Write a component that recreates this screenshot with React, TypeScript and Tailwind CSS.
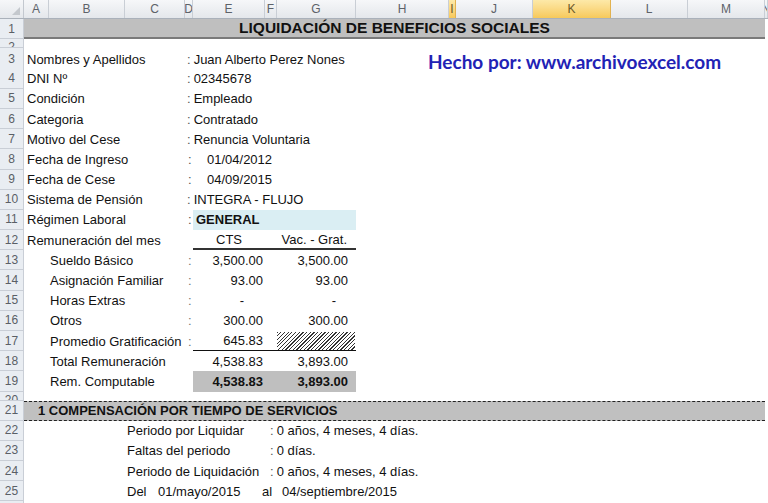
import React from "react";

const GRID =
  "grid grid-cols-[24px_25px_76px_60px_8px_72px_12px_79px_93px_7px_77px_78px_77px_77px_1fr]";

function RowNum({ n, short }: { n: number; short?: boolean }) {
  return (
    <div
      className={`col-start-1 row-start-1 bg-[#e9edf2] border-r border-b border-[#c9ced6] text-[12px] leading-none text-[#5a5f66] flex justify-center overflow-hidden ${
        short ? "items-end" : "items-center"
      }`}
    >
      <span className={short ? "mb-[-6px]" : ""}>{n}</span>
    </div>
  );
}

function Row({
  n,
  h = "h-[20.2px]",
  short,
  children,
}: {
  n: number;
  h?: string;
  short?: boolean;
  children?: React.ReactNode;
}) {
  return (
    <div className={`${GRID} ${h}`}>
      <RowNum n={n} short={short} />
      {children}
    </div>
  );
}

const cell = "row-start-1 flex items-center whitespace-nowrap text-[13px] leading-none text-[#111]";

function InfoRow({ n, label, value }: { n: number; label: string; value: string }) {
  return (
    <Row n={n}>
      <div className={`${cell} col-start-2 col-span-3 pl-[3px]`}>{label}</div>
      <div className={`${cell} col-start-5 col-span-4 pl-[2px]`}>
        <span className="text-[#555] mr-[3px]">:</span>
        {value}
      </div>
    </Row>
  );
}

function DateRow({ n, label, value }: { n: number; label: string; value: string }) {
  return (
    <Row n={n}>
      <div className={`${cell} col-start-2 col-span-3 pl-[3px]`}>{label}</div>
      <div className={`${cell} col-start-5 pl-[3px] text-[#555]`}>:</div>
      <div className={`${cell} col-start-6 col-span-3 pl-[14px]`}>{value}</div>
    </Row>
  );
}

function AmountRow({
  n,
  label,
  a,
  b,
  colon = true,
  last,
}: {
  n: number;
  label: string;
  a: string;
  b: string;
  colon?: boolean;
  last?: boolean;
}) {
  const dashA = a === "-";
  const dashB = b === "-";
  return (
    <Row n={n}>
      <div className={`${cell} col-start-3 col-span-2 pl-[1px]`}>{label}</div>
      {colon && <div className={`${cell} col-start-5 pl-[3px] text-[#777]`}>:</div>}
      <div
        className={`${cell} col-start-6 justify-end ${dashA ? "pr-[21px]" : "pr-[2px]"} ${
          last ? "border-b border-[#111]" : ""
        }`}
      >
        {a}
      </div>
      {last && <div className="row-start-1 col-start-7 border-b border-[#111]" />}
      {last ? (
        <div className="row-start-1 col-start-8 border-b border-[#111] pr-[1px] pt-[1px]">
          <div className="h-full w-full bg-[repeating-linear-gradient(135deg,#333333_0px,#333333_0.9px,#ffffff_0.9px,#ffffff_2.6px)]" />
        </div>
      ) : (
        <div className={`${cell} col-start-8 justify-end ${dashB ? "pr-[20px]" : "pr-[8px]"}`}>{b}</div>
      )}
    </Row>
  );
}

export default function App() {
  const cols = ["A", "B", "C", "D", "E", "F", "G", "H", "I", "J", "K", "L", "M", "N"];
  const hl = ["I", "K"];
  return (
    <div className="w-[768px] h-[503px] overflow-hidden bg-white font-['Liberation_Sans',Arial,sans-serif]">
      {/* Column headers */}
      <div className={`${GRID} h-[19px] border-b border-[#aab1ba]`}>
        <div className="relative bg-gradient-to-b from-[#f6f7f9] to-[#e4e7eb] border-r border-[#c3c8cf]">
          <div className="absolute right-[3px] bottom-[3px] w-0 h-0 border-l-[8px] border-l-transparent border-b-[8px] border-b-[#c4c8cd]" />
        </div>
        {cols.map((c) => (
          <div
            key={c}
            className={`flex items-center justify-center overflow-hidden text-[12px] leading-none border-r ${
              hl.includes(c)
                ? "bg-gradient-to-b from-[#fde9a8] to-[#f7c95a] text-[#6b5a2a] border-[#e2b250]"
                : "bg-gradient-to-b from-[#f6f7f9] to-[#e4e7eb] text-[#5d6269] border-[#c9ced5]"
            }`}
          >
            {c}
          </div>
        ))}
      </div>

      {/* Row 1 - title */}
      <Row n={1} h="h-[20px]">
        <div className="row-start-1 col-start-2 col-span-13 bg-[#bfbfbf] border-b-2 border-[#7a7a7a] flex items-center justify-center text-[15.5px] font-bold leading-none text-[#111] whitespace-nowrap">
          LIQUIDACIÓN DE BENEFICIOS SOCIALES
        </div>
      </Row>

      {/* Row 2 */}
      <Row n={2} h="h-[9.4px]" short />

      {/* Row 3 */}
      <Row n={3}>
        <div className={`${cell} col-start-2 col-span-3 pl-[3px]`}>Nombres y Apellidos</div>
        <div className={`${cell} col-start-5 col-span-4 pl-[2px]`}>
          <span className="text-[#555] mr-[3px]">:</span>Juan Alberto Perez Nones
        </div>
        <div className="row-start-1 col-start-9 col-span-6 flex items-center pl-[72px] pt-[4px] whitespace-nowrap font-['Lato',sans-serif] font-bold text-[19px] leading-none text-[#2222b5]">
          Hecho por: www.archivoexcel.com
        </div>
      </Row>
      <InfoRow n={4} label="DNI Nº" value="02345678" />
      <InfoRow n={5} label="Condición" value="Empleado" />
      <InfoRow n={6} label="Categoria" value="Contratado" />
      <InfoRow n={7} label="Motivo del Cese" value="Renuncia Voluntaria" />
      <DateRow n={8} label="Fecha de Ingreso" value="01/04/2012" />
      <DateRow n={9} label="Fecha de Cese" value="04/09/2015" />
      <InfoRow n={10} label="Sistema de Pensión" value="INTEGRA - FLUJO" />

      {/* Row 11 */}
      <Row n={11}>
        <div className={`${cell} col-start-2 col-span-3 pl-[3px]`}>Régimen Laboral</div>
        <div className={`${cell} col-start-5 pl-[3px] text-[#555]`}>:</div>
        <div className={`${cell} col-start-6 col-span-3 bg-[#daeef3] pl-[3px] font-bold`}>GENERAL</div>
      </Row>

      {/* Row 12 */}
      <Row n={12}>
        <div className={`${cell} col-start-2 col-span-3 pl-[3px]`}>Remuneración del mes</div>
        <div className={`${cell} col-start-6 justify-center border-b-2 border-[#333]`}>CTS</div>
        <div className="row-start-1 col-start-7 border-b-2 border-[#333]" />
        <div className={`${cell} col-start-8 justify-end pr-[9px] border-b-2 border-[#333]`}>Vac. - Grat.</div>
      </Row>

      <AmountRow n={13} label="Sueldo Básico" a="3,500.00" b="3,500.00" />
      <AmountRow n={14} label="Asignación Familiar" a="93.00" b="93.00" />
      <AmountRow n={15} label="Horas Extras" a="-" b="-" />
      <AmountRow n={16} label="Otros" a="300.00" b="300.00" />
      <AmountRow n={17} label="Promedio Gratificación" a="645.83" b="" last />
      <AmountRow n={18} label="Total Remuneración" a="4,538.83" b="3,893.00" colon={false} />

      {/* Row 19 */}
      <Row n={19}>
        <div className={`${cell} col-start-3 col-span-2 pl-[1px]`}>Rem. Computable</div>
        <div className={`${cell} col-start-6 justify-end pr-[2px] bg-[#bfbfbf] font-bold`}>4,538.83</div>
        <div className="row-start-1 col-start-7 bg-[#bfbfbf]" />
        <div className={`${cell} col-start-8 justify-end pr-[8px] bg-[#bfbfbf] font-bold`}>3,893.00</div>
      </Row>

      {/* Row 20 */}
      <Row n={20} h="h-[9px]" short />

      {/* Row 21 */}
      <Row n={21} h="h-[20px]">
        <div className="row-start-1 col-start-2 col-span-13 bg-[#c0c0c0] border-y border-dashed border-[#222] flex items-center pl-[14px] text-[13px] font-bold leading-none text-[#111] whitespace-nowrap">
          1 COMPENSACIÓN POR TIEMPO DE SERVICIOS
        </div>
      </Row>

      {/* Rows 22-25 */}
      <Row n={22}>
        <div className={`${cell} col-start-4 col-span-3 pl-[2px]`}>Periodo por Liquidar</div>
        <div className={`${cell} col-start-7 col-span-4 pl-[5px]`}>
          <span className="text-[#555] mr-[3px]">:</span>0 años, 4 meses, 4 días.
        </div>
      </Row>
      <Row n={23}>
        <div className={`${cell} col-start-4 col-span-3 pl-[2px]`}>Faltas del periodo</div>
        <div className={`${cell} col-start-7 col-span-4 pl-[5px]`}>
          <span className="text-[#555] mr-[3px]">:</span>0 días.
        </div>
      </Row>
      <Row n={24}>
        <div className={`${cell} col-start-4 col-span-3 pl-[2px]`}>Periodo de Liquidación</div>
        <div className={`${cell} col-start-7 col-span-4 pl-[5px]`}>
          <span className="text-[#555] mr-[3px]">:</span>0 años, 4 meses, 4 días.
        </div>
      </Row>
      <Row n={25}>
        <div className={`${cell} col-start-4 col-span-6 pl-[2px]`}>
          <span className="w-[31px]">Del</span>
          <span className="w-[104px]">01/mayo/2015</span>
          <span className="w-[20px]">al</span>
          <span>04/septiembre/2015</span>
        </div>
      </Row>
      <Row n={26} />
    </div>
  );
}
